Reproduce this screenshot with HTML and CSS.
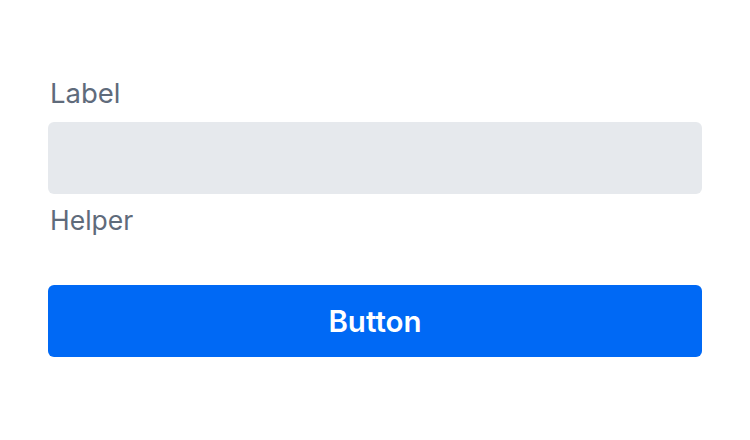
FILE: index.html
```html
<!DOCTYPE html>
<html>
<head>
<meta charset="utf-8">
<link rel="stylesheet" href="styles.css">
</head>
<body>
<div class="form">
  <label class="label" for="field">Label</label>
  <input class="input" id="field" type="text">
  <div class="helper">Helper</div>
  <button class="button" type="button">Button</button>
</div>
</body>
</html>
```
FILE: styles.css
```css
html, body {
  margin: 0;
  padding: 0;
  background: #ffffff;
}
body {
  width: 750px;
  height: 440px;
  font-family: Inter, "Noto Sans", sans-serif;
}
.form {
  display: flex;
  flex-direction: column;
  padding: 75px 48px 0 48px;
}
.label {
  display: block;
  font-size: 27.5px;
  line-height: 36px;
  color: #5f6b7b;
  padding-left: 2px;
}
.input {
  margin-top: 11px;
  height: 72px;
  box-sizing: border-box;
  border: none;
  border-radius: 6px;
  background: #e6e9ed;
  outline: none;
  padding: 0 16px;
  font: inherit;
}
.helper {
  margin-top: 8px;
  font-size: 26.5px;
  line-height: 36px;
  color: #5f6b7b;
  padding-left: 2px;
}
.button {
  margin-top: 47px;
  height: 72px;
  border: none;
  border-radius: 6px;
  background: #0069f5;
  color: #ffffff;
  font-family: Inter, "Noto Sans", sans-serif;
  font-size: 29.5px;
  font-weight: 600;
  cursor: pointer;
}
```
